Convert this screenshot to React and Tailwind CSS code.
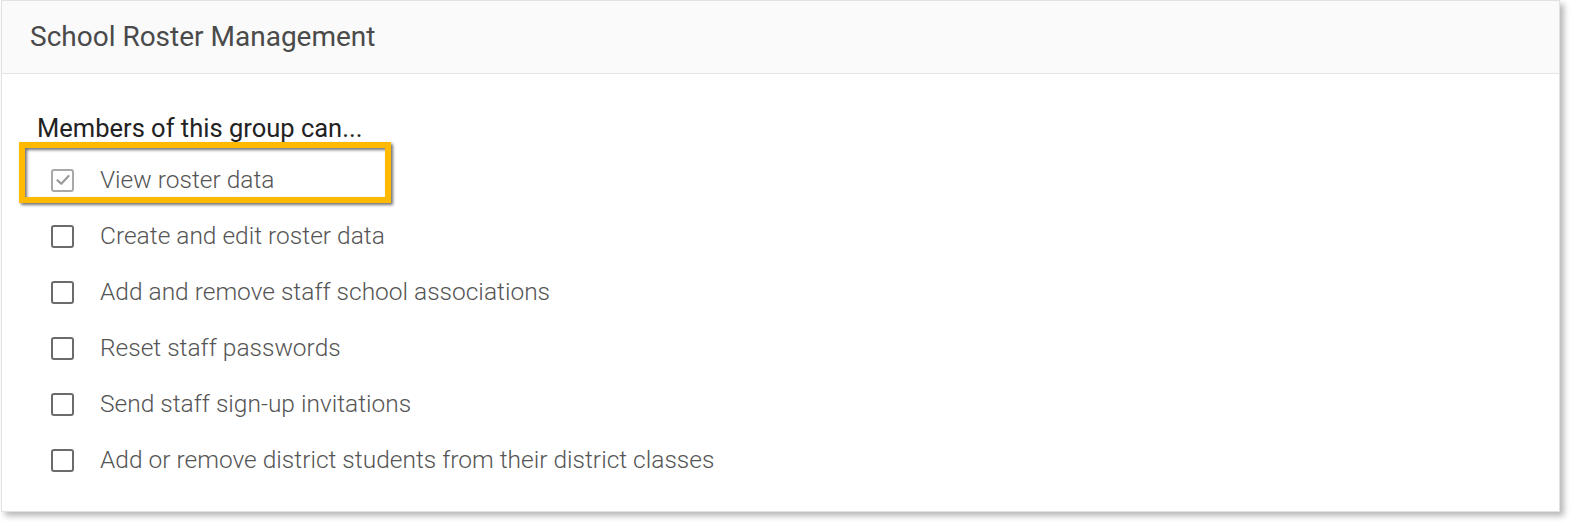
import React from "react";

const items = [
  "View roster data",
  "Create and edit roster data",
  "Add and remove staff school associations",
  "Reset staff passwords",
  "Send staff sign-up invitations",
  "Add or remove district students from their district classes",
];

function Box({ checked }) {
  if (checked) {
    return (
      <div className="w-[23px] h-[23px] rounded-[3px] border-[2px] border-[#a8a8a8] flex items-center justify-center">
        <svg width="16" height="16" viewBox="0 0 14 14" fill="none">
          <path d="M2.2 7.3 L5.5 10.3 L11.9 3.6" stroke="#9a9a9a" strokeWidth="1.9" strokeLinecap="round" strokeLinejoin="round" />
        </svg>
      </div>
    );
  }
  return <div className="w-[23px] h-[23px] rounded-[3px] border-[2.5px] border-[#6b6b6b]" />;
}

export default function App() {
  return (
    <div className="w-[1571px] h-[523px] bg-white" style={{ fontFamily: "Roboto, 'Liberation Sans', sans-serif" }}>
      <div className="ml-[1px] w-[1559px] h-[512px] bg-white border border-[#e2e2e2] shadow-[4px_4px_6px_rgba(0,0,0,0.28)]">
        <div className="h-[73px] bg-[#fafafa] border-b border-[#e4e4e4] flex items-center pl-[28px]">
          <span className="text-[28px] text-[#4a4a4a] leading-none">School Roster Management</span>
        </div>
        <div className="pt-[38px] pl-[35px]">
          <div className="text-[25.5px] leading-[32px] text-[#222]">Members of this group can...</div>
          <div className="mt-[8px]">
            {items.map((t, i) => (
              <div key={i} className="relative h-[56px] flex items-center">
                <div className="ml-[14px] w-[49px] flex items-center">
                  <Box checked={i === 0} />
                </div>
                <span className="text-[24.5px] font-light text-[#555] leading-none">{t}</span>
                {i === 0 && (
                  <div className="absolute left-[-18px] top-[-10px] w-[372px] h-[61px] border-[6px] border-[#ffb900] drop-shadow-[2px_2px_1.5px_rgba(0,0,0,0.55)]" />
                )}
              </div>
            ))}
          </div>
        </div>
      </div>
    </div>
  );
}
